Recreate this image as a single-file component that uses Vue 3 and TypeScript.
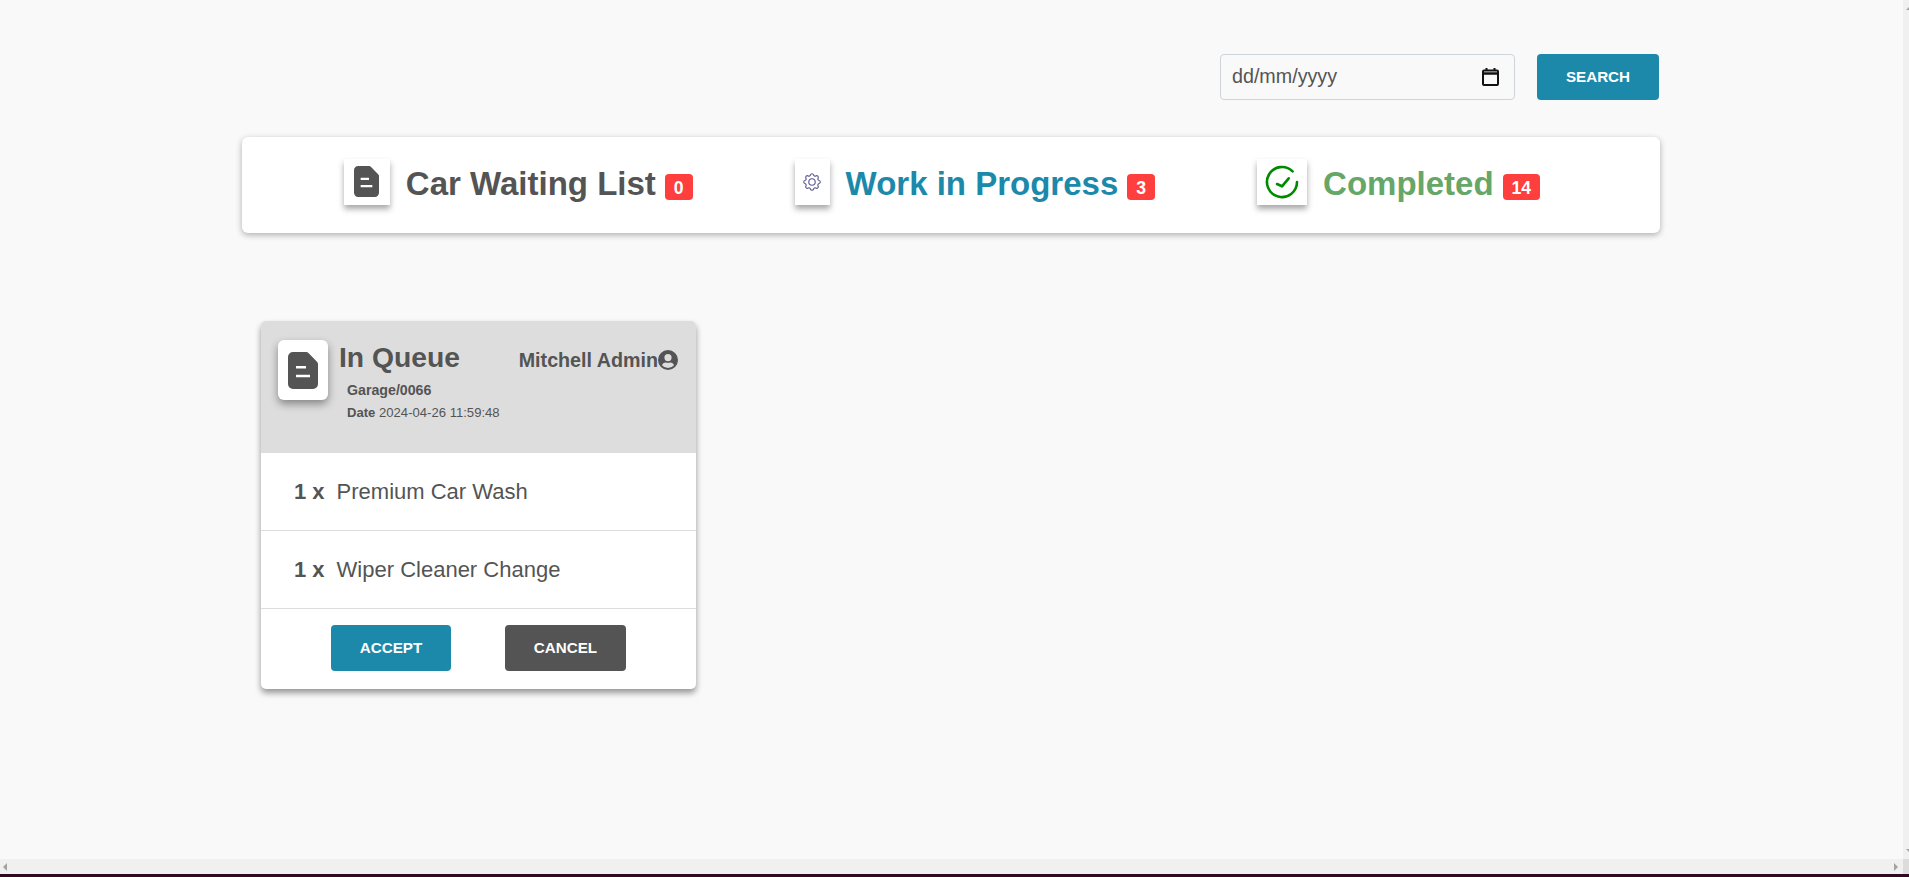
<template>
  <div class="screen">
    <div class="viewport">
      <div class="page">
        <div class="search-row">
          <label class="date-field">
            <input class="date-input" type="text" placeholder="dd/mm/yyyy" />
            <svg width="17" height="18" viewBox="0 0 17 18" fill="none" stroke="#111" stroke-width="2">
              <rect x="1" y="2.5" width="15" height="14.5" rx="1" />
              <path d="M1 5.5h15" stroke-width="2.5" />
              <path d="M4.5 0v3M12.5 0v3" />
            </svg>
          </label>
          <button class="btn btn-primary search-btn">Search</button>
        </div>

        <div class="tabs-card">
          <div v-for="tab in tabs" :key="tab.label" class="tab">
            <span class="tab-icon" :class="tab.kind">
              <svg v-if="tab.kind === 'waiting'" width="25" height="33" viewBox="0 0 30 37">
                <path fill="#545454" fill-rule="evenodd" :d="fileIcon" />
              </svg>
              <svg v-else-if="tab.kind === 'progress'" width="22" height="22" viewBox="0 0 24 24" fill="none" stroke="#5c5a92" stroke-width="1.25">
                <path d="M10.325 4.317c.426-1.756 2.924-1.756 3.35 0a1.724 1.724 0 0 0 2.573 1.066c1.543-.94 3.31.826 2.37 2.37a1.724 1.724 0 0 0 1.065 2.572c1.756.426 1.756 2.924 0 3.35a1.724 1.724 0 0 0-1.066 2.573c.94 1.543-.826 3.31-2.37 2.37a1.724 1.724 0 0 0-2.572 1.065c-.426 1.756-2.924 1.756-3.35 0a1.724 1.724 0 0 0-2.573-1.066c-1.543.94-3.31-.826-2.37-2.37a1.724 1.724 0 0 0-1.065-2.572c-1.756-.426-1.756-2.924 0-3.35a1.724 1.724 0 0 0 1.066-2.573c-.94-1.543.826-3.31 2.37-2.37 1 .608 2.296.07 2.572-1.065z" />
                <circle cx="12" cy="12" r="3.5" />
              </svg>
              <svg v-else width="34" height="34" viewBox="0 0 34 34" fill="none" stroke="#008a00" stroke-width="2.6" stroke-linecap="round" stroke-linejoin="round">
                <path d="M27.6 6.4A15 15 0 1 0 32 17" />
                <path d="M12 19l5 2.3 6.7-8" />
              </svg>
            </span>
            <span class="tab-label" :class="tab.kind">{{ tab.label }}</span>
            <span class="count">{{ tab.count }}</span>
          </div>
        </div>

        <div class="order-card">
          <div class="order-head">
            <span class="head-icon">
              <svg width="30" height="37" viewBox="0 0 30 37">
                <path fill="#545454" fill-rule="evenodd" :d="fileIcon" />
              </svg>
            </span>
            <div class="head-info">
              <div class="head-top">
                <span class="state">In Queue</span>
                <span class="person">
                  Mitchell Admin
                  <svg width="20" height="20" viewBox="0 0 20 20">
                    <path fill="#545454" fill-rule="evenodd" d="M10 0a10 10 0 1 1 0 20 10 10 0 0 1 0-20zm0 4a3.6 3.6 0 1 0 0 7.2A3.6 3.6 0 0 0 10 4zm0 14a8 8 0 0 0 6-2.8c-.6-1.5-2-2.6-3.6-2.6-.7 0-1.3.4-2.4.4s-1.7-.4-2.4-.4c-1.6 0-3 1.1-3.6 2.6A8 8 0 0 0 10 18z" />
                  </svg>
                </span>
              </div>
              <div class="ref">Garage/0066</div>
              <div class="date"><b>Date</b> 2024-04-26 11:59:48</div>
            </div>
          </div>

          <div v-for="line in lines" :key="line.name" class="line">
            <b>{{ line.qty }} x</b>
            <span>{{ line.name }}</span>
          </div>

          <div class="actions">
            <button class="btn btn-primary accept-btn">Accept</button>
            <button class="btn btn-dark cancel-btn">Cancel</button>
          </div>
        </div>
      </div>
      <div class="v-scrollbar">
        <span class="arrow up"></span>
        <span class="arrow down"></span>
      </div>
    </div>
    <div class="h-scrollbar">
      <span class="arrow left"></span>
      <span class="arrow right"></span>
      <span class="corner"></span>
    </div>
    <div class="desktop-strip"></div>
  </div>
</template>

<script setup lang="ts">
type Tab = { kind: 'waiting' | 'progress' | 'done'; label: string; count: number }

const tabs: Tab[] = [
  { kind: 'waiting', label: 'Car Waiting List', count: 0 },
  { kind: 'progress', label: 'Work in Progress', count: 3 },
  { kind: 'done', label: 'Completed', count: 14 }
]

const lines = [
  { qty: 1, name: 'Premium Car Wash' },
  { qty: 1, name: 'Wiper Cleaner Change' }
]

// same sheet icon in the tabs and the card head
const fileIcon =
  'M5 0h13.2c.8 0 1.5.3 2 .8L29.2 10c.5.5.8 1.2.8 2v20a5 5 0 0 1-5 5H5a5 5 0 0 1-5-5V5a5 5 0 0 1 5-5zM8 14v2.6h10V14zM8 22.7v2.6h14v-2.6z'
</script>

<style>
html,
body {
  margin: 0;
  overflow: hidden;
}
</style>

<style scoped>
.screen {
  height: 877px;
  display: flex;
  flex-direction: column;
  background: #f9f9f9;
  color: #545454;
  font-family: "Liberation Sans", Arial, sans-serif;
}

.viewport {
  flex: 1;
  display: flex;
  min-height: 0;
}

.page {
  flex: 1;
  padding: 54px 0 0 242px;
}

.search-row {
  width: 1417px;
  display: flex;
  justify-content: flex-end;
  gap: 22px;
}

.date-field {
  box-sizing: border-box;
  width: 295px;
  height: 46px;
  padding: 0 15px 0 11px;
  display: flex;
  align-items: center;
  border: 1px solid #ced4da;
  border-radius: 4px;
}

.date-input {
  flex: 1;
  min-width: 0;
  padding: 0 0 2px;
  border: none;
  outline: none;
  background: transparent;
  font-family: inherit;
  font-size: 19.7px;
}

.date-input::placeholder {
  color: #545454;
  opacity: 1;
}

.btn {
  box-sizing: border-box;
  height: 46px;
  padding: 0 0 2px;
  border: none;
  border-radius: 4px;
  color: #fff;
  font-family: inherit;
  font-size: 15.2px;
  font-weight: 700;
  text-transform: uppercase;
}

.btn-primary {
  background: #1c89ab;
}

.btn-dark {
  background: #545454;
}

.search-btn {
  width: 122px;
}

.accept-btn {
  width: 120px;
}

.cancel-btn {
  width: 121px;
}

.tabs-card {
  box-sizing: border-box;
  width: 1418px;
  height: 96px;
  margin-top: 37px;
  padding: 0 18px 0 0;
  display: flex;
  justify-content: center;
  align-items: center;
  gap: 102px;
  background: #fff;
  border-radius: 6px;
  box-shadow: 0 2px 6px rgba(0, 0, 0, 0.3);
}

.tab {
  height: 39px;
  display: flex;
  align-items: center;
}

.tab-icon {
  height: 46px;
  display: flex;
  justify-content: center;
  align-items: center;
  margin: -7px 16px 0 0;
  background: #fff;
  box-shadow: 0 4px 6px rgba(0, 0, 0, 0.35);
}

.tab-icon.waiting {
  width: 46px;
}

.tab-icon.progress {
  width: 35px;
}

.tab-icon.done {
  width: 50px;
}

.tab-label {
  margin-bottom: 2px;
  font-size: 33px;
  font-weight: 700;
}

.tab-label.progress {
  color: #1c89ab;
}

.tab-label.done {
  color: #66a667;
}

.count {
  margin: 3px 0 0 9px;
  padding: 0 9px;
  height: 26px;
  line-height: 29px;
  border-radius: 4px;
  background: #ff3e3e;
  color: #fff;
  font-size: 17.6px;
  font-weight: 700;
}

.order-card {
  box-sizing: border-box;
  width: 435px;
  margin: 88px 0 0 19px;
  border-radius: 5px;
  overflow: hidden;
  background: #fff;
  box-shadow: 0 4px 6px rgba(0, 0, 0, 0.4);
}

.order-head {
  height: 132px;
  box-sizing: border-box;
  padding: 19px 18px 0 17px;
  display: flex;
  background: #ddd;
}

.head-icon {
  flex: none;
  width: 50px;
  height: 60px;
  display: flex;
  justify-content: center;
  align-items: center;
  border-radius: 6px;
  background: #fff;
  box-shadow: 0 4px 8px rgba(0, 0, 0, 0.4);
}

.head-info {
  flex: 1;
  padding-left: 11px;
}

.head-top {
  display: flex;
  justify-content: space-between;
}

.state {
  font-size: 28.3px;
  font-weight: 700;
  line-height: 34px;
}

.person {
  display: flex;
  align-items: center;
  height: 34px;
  margin-top: 3px;
  font-size: 19.7px;
  font-weight: 700;
}

.ref {
  margin: 1px 0 0 8px;
  font-size: 14.2px;
  font-weight: 700;
  line-height: 24px;
}

.date {
  margin: -1px 0 0 8px;
  font-size: 13.1px;
  line-height: 24px;
}

.line {
  height: 78px;
  box-sizing: border-box;
  padding-left: 33px;
  display: flex;
  align-items: center;
  gap: 12px;
  border-bottom: 1px solid #ddd;
  font-size: 22px;
}

.actions {
  height: 80px;
  padding: 16px 0 0 70px;
  box-sizing: border-box;
  display: flex;
  gap: 54px;
}

.v-scrollbar {
  flex: none;
  width: 6px;
  padding: 6px 0;
  box-sizing: border-box;
  overflow: hidden;
  display: flex;
  flex-direction: column;
  justify-content: space-between;
  background: #f0f0f0;
}

.h-scrollbar {
  flex: none;
  height: 15px;
  display: flex;
  align-items: center;
  justify-content: space-between;
  background: #f0f0f0;
  position: relative;
}

.arrow {
  flex: none;
  width: 0;
  height: 0;
}

.arrow.up,
.arrow.down {
  margin-left: 3px;
  border-left: 4px solid transparent;
  border-right: 4px solid transparent;
}

.arrow.up {
  border-bottom: 4px solid #a3a3a3;
}

.arrow.down {
  border-top: 4px solid #a3a3a3;
}

.arrow.left,
.arrow.right {
  border-top: 4px solid transparent;
  border-bottom: 4px solid transparent;
}

.arrow.left {
  margin-left: 3px;
  border-right: 4px solid #a3a3a3;
}

.arrow.right {
  margin-right: 11px;
  border-left: 4px solid #a3a3a3;
}

.corner {
  width: 6px;
  height: 15px;
  background: #dcdcdc;
  position: absolute;
  right: 0;
}

.desktop-strip {
  flex: none;
  height: 3px;
  background: #300a24;
}
</style>
